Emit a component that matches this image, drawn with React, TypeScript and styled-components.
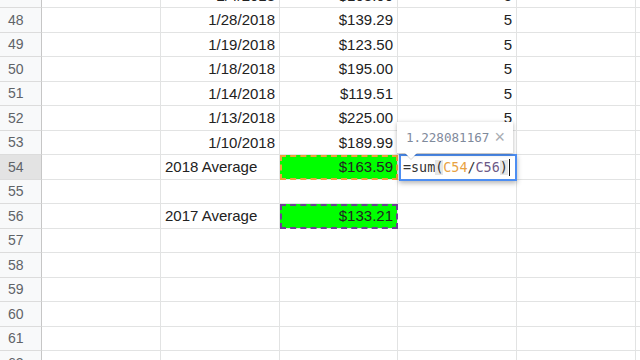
import React, { FC } from 'react'
import styled, { createGlobalStyle, css } from 'styled-components'

const GlobalStyle = createGlobalStyle`
  html, body {
    margin: 0;
    padding: 0;
    background: #ffffff;
    overflow: hidden;
  }
  body {
    width: 640px;
    height: 360px;
    font-family: 'Liberation Sans', Arial, sans-serif;
  }
`

const ROW_H = 24.5

const Viewport = styled.div`
  width: 640px;
  height: 360px;
  overflow: hidden;
`

const Grid = styled.div`
  display: grid;
  grid-template-columns: 42px 119px 119px 118px 119px 119px 4px;
  grid-auto-rows: ${ROW_H}px;
  margin-top: -16.5px;
`

const RowHeader = styled.div<{ $active?: boolean }>`
  display: flex;
  align-items: center;
  padding-left: 8px;
  font-size: 14px;
  color: #5f6368;
  background: ${(p) => (p.$active ? '#e3e3e3' : '#f8f9fa')};
  border-right: 1px solid #c6c6c6;
  border-bottom: 1px solid #dcdcdc;
  box-sizing: border-box;
`

const Cell = styled.div<{ $align?: 'left' | 'right'; $fill?: string; $dash?: string }>`
  position: relative;
  display: flex;
  align-items: center;
  justify-content: ${(p) => (p.$align === 'left' ? 'flex-start' : 'flex-end')};
  padding: 0 4px;
  font-size: 15px;
  color: #222222;
  white-space: nowrap;
  border-right: 1px solid #e2e3e3;
  border-bottom: 1px solid #e2e3e3;
  box-sizing: border-box;
  background: ${(p) => p.$fill ?? 'transparent'};
  ${(p) =>
    p.$dash &&
    css`
      outline: 2px dashed ${p.$dash};
      outline-offset: -2px;
    `}
`

const Editor = styled.div`
  position: absolute;
  left: 1px;
  top: -1px;
  width: 118px;
  height: 27px;
  box-sizing: border-box;
  border: 2px solid #4d8ef2;
  background: #ffffff;
  box-shadow: 0 2px 5px rgba(0, 0, 0, 0.3);
  display: flex;
  align-items: center;
  padding-left: 2px;
  font-family: 'DejaVu Sans Mono', 'Liberation Mono', monospace;
  font-size: 13.4px;
  color: #333333;
  z-index: 2;
`

const Ref = styled.span<{ $color: string }>`
  color: ${(p) => p.$color};
`

const Paren = styled.span`
  background: #e6e6e6;
`

const Caret = styled.span`
  display: inline-block;
  width: 1px;
  height: 17px;
  margin-left: 1px;
  background: #111111;
`

const Tooltip = styled.div`
  position: absolute;
  left: -1px;
  bottom: calc(100% + 2px);
  width: 116px;
  height: 31px;
  box-sizing: border-box;
  background: #ffffff;
  box-shadow: 0 1px 4px rgba(0, 0, 0, 0.3);
  display: flex;
  align-items: center;
  padding-left: 9px;
  font-family: 'DejaVu Sans Mono', 'Liberation Mono', monospace;
  font-size: 12.6px;
  color: #7f8a9c;
  z-index: 3;

  &::after {
    content: '';
    position: absolute;
    left: 8px;
    bottom: -6px;
    border-left: 6px solid transparent;
    border-right: 6px solid transparent;
    border-top: 6px solid #ffffff;
    filter: drop-shadow(0 1px 0 rgba(0, 0, 0, 0.15));
  }
`

const Close = styled.span`
  margin-left: 5px;
  font-family: 'Liberation Sans', Arial, sans-serif;
  font-size: 18px;
  color: #a8acb2;
`

type Row = {
  n: number
  c?: string
  d?: string
  e?: string
  label?: boolean
  fill?: string
  dash?: string
}

const rows: Row[] = [
  { n: 47, c: '2/4/2018', d: '$108.00', e: '5' },
  { n: 48, c: '1/28/2018', d: '$139.29', e: '5' },
  { n: 49, c: '1/19/2018', d: '$123.50', e: '5' },
  { n: 50, c: '1/18/2018', d: '$195.00', e: '5' },
  { n: 51, c: '1/14/2018', d: '$119.51', e: '5' },
  { n: 52, c: '1/13/2018', d: '$225.00', e: '5' },
  { n: 53, c: '1/10/2018', d: '$189.99', e: '5' },
  { n: 54, c: '2018 Average', d: '$163.59', label: true, fill: '#00ff00', dash: '#f0a23a' },
  { n: 55 },
  { n: 56, c: '2017 Average', d: '$133.21', label: true, fill: '#00ff00', dash: '#6f3f96' },
  { n: 57 },
  { n: 58 },
  { n: 59 },
  { n: 60 },
  { n: 61 },
  { n: 62 },
]

const App: FC = () => {
  return (
    <>
      <GlobalStyle />
      <Viewport>
        <Grid>
          {rows.map((r) => (
            <React.Fragment key={r.n}>
              <RowHeader $active={r.n === 54}>{r.n}</RowHeader>
              <Cell />
              <Cell $align={r.label ? 'left' : 'right'}>{r.c}</Cell>
              <Cell $fill={r.fill} $dash={r.dash}>
                {r.d}
              </Cell>
              <Cell>
                {r.e}
                {r.n === 54 ? (
                  <>
                    <Tooltip>
                      1.228081167<Close>×</Close>
                    </Tooltip>
                    <Editor>
                      =sum<Paren>(</Paren>
                      <Ref $color="#e8a243">C54</Ref>/<Ref $color="#6d5a88">C56</Ref>
                      <Paren>)</Paren>
                      <Caret />
                    </Editor>
                  </>
                ) : null}
              </Cell>
              <Cell />
              <Cell />
            </React.Fragment>
          ))}
        </Grid>
      </Viewport>
    </>
  )
}

export default App
